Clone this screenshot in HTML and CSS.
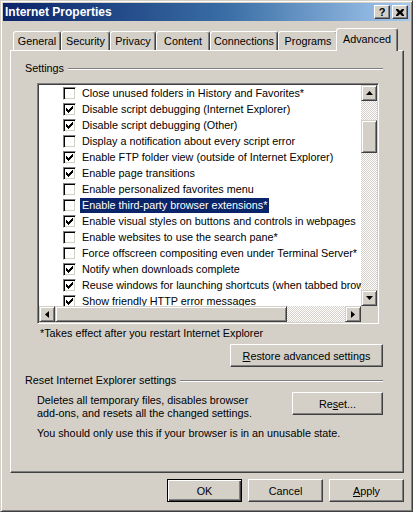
FILE: index.html
```html
<!DOCTYPE html>
<html>
<head>
<meta charset="utf-8">
<link rel="stylesheet" href="styles.css">
</head>
<body>
<div class="window">
  <div class="titlebar">
    <span class="title">Internet Properties</span>
    <div class="tbtns">
      <span class="tbtn help">?</span>
      <span class="tbtn"><svg width="8" height="7" viewBox="0 0 8 7"><path d="M0 0h2l2 2 2-2h2v1l-2 2.5 2 2.5v1h-2l-2-2-2 2h-2v-1l2-2.5-2-2.5z" fill="#000"/></svg></span>
    </div>
  </div>
  <div class="content">
    <div class="tabs">
      <div class="tab w-general">General</div>
      <div class="tab w-security">Security</div>
      <div class="tab w-privacy">Privacy</div>
      <div class="tab w-content">Content</div>
      <div class="tab w-connections">Connections</div>
      <div class="tab w-programs">Programs</div>
      <div class="tab active w-advanced">Advanced</div>
    </div>
    <div class="panel">
      <div class="group-label"><span>Settings</span><span class="etch"></span></div>
      <div class="listbox">
        <div class="lb-main">
          <div class="lb-rows">
            <div class="row"><span class="cb"></span><span class="lbl">Close unused folders in History and Favorites*</span></div>
            <div class="row"><span class="cb"><svg class="chk" viewBox="0 0 7 7"><path d="M0 2h1v3h-1zM1 3h1v3h-1zM2 4h1v3h-1zM3 3h1v3h-1zM4 2h1v3h-1zM5 1h1v3h-1zM6 0h1v3h-1z"/></svg></span><span class="lbl">Disable script debugging (Internet Explorer)</span></div>
            <div class="row"><span class="cb"><svg class="chk" viewBox="0 0 7 7"><path d="M0 2h1v3h-1zM1 3h1v3h-1zM2 4h1v3h-1zM3 3h1v3h-1zM4 2h1v3h-1zM5 1h1v3h-1zM6 0h1v3h-1z"/></svg></span><span class="lbl">Disable script debugging (Other)</span></div>
            <div class="row"><span class="cb"></span><span class="lbl">Display a notification about every script error</span></div>
            <div class="row"><span class="cb"><svg class="chk" viewBox="0 0 7 7"><path d="M0 2h1v3h-1zM1 3h1v3h-1zM2 4h1v3h-1zM3 3h1v3h-1zM4 2h1v3h-1zM5 1h1v3h-1zM6 0h1v3h-1z"/></svg></span><span class="lbl">Enable FTP folder view (outside of Internet Explorer)</span></div>
            <div class="row"><span class="cb"><svg class="chk" viewBox="0 0 7 7"><path d="M0 2h1v3h-1zM1 3h1v3h-1zM2 4h1v3h-1zM3 3h1v3h-1zM4 2h1v3h-1zM5 1h1v3h-1zM6 0h1v3h-1z"/></svg></span><span class="lbl">Enable page transitions</span></div>
            <div class="row"><span class="cb"></span><span class="lbl">Enable personalized favorites menu</span></div>
            <div class="row"><span class="cb"></span><span class="lbl sel">Enable third-party browser extensions*</span></div>
            <div class="row"><span class="cb"><svg class="chk" viewBox="0 0 7 7"><path d="M0 2h1v3h-1zM1 3h1v3h-1zM2 4h1v3h-1zM3 3h1v3h-1zM4 2h1v3h-1zM5 1h1v3h-1zM6 0h1v3h-1z"/></svg></span><span class="lbl">Enable visual styles on buttons and controls in webpages</span></div>
            <div class="row"><span class="cb"></span><span class="lbl">Enable websites to use the search pane*</span></div>
            <div class="row"><span class="cb"></span><span class="lbl">Force offscreen compositing even under Terminal Server*</span></div>
            <div class="row"><span class="cb"><svg class="chk" viewBox="0 0 7 7"><path d="M0 2h1v3h-1zM1 3h1v3h-1zM2 4h1v3h-1zM3 3h1v3h-1zM4 2h1v3h-1zM5 1h1v3h-1zM6 0h1v3h-1z"/></svg></span><span class="lbl">Notify when downloads complete</span></div>
            <div class="row"><span class="cb"><svg class="chk" viewBox="0 0 7 7"><path d="M0 2h1v3h-1zM1 3h1v3h-1zM2 4h1v3h-1zM3 3h1v3h-1zM4 2h1v3h-1zM5 1h1v3h-1zM6 0h1v3h-1z"/></svg></span><span class="lbl">Reuse windows for launching shortcuts (when tabbed browsing is on)</span></div>
            <div class="row"><span class="cb"><svg class="chk" viewBox="0 0 7 7"><path d="M0 2h1v3h-1zM1 3h1v3h-1zM2 4h1v3h-1zM3 3h1v3h-1zM4 2h1v3h-1zM5 1h1v3h-1zM6 0h1v3h-1z"/></svg></span><span class="lbl">Show friendly HTTP error messages</span></div>
          </div>
          <div class="vscroll">
            <span class="sbtn"><svg width="7" height="4" viewBox="0 0 7 4"><path d="M3.5 0L7 4H0z"/></svg></span>
            <div class="vtrack"><span class="vthumb"></span></div>
            <span class="sbtn"><svg width="7" height="4" viewBox="0 0 7 4"><path d="M0 0h7L3.5 4z"/></svg></span>
          </div>
        </div>
        <div class="lb-bottom">
          <div class="hscroll">
            <span class="sbtn"><svg width="4" height="7" viewBox="0 0 4 7"><path d="M4 0v7L0 3.5z"/></svg></span>
            <div class="htrack"><span class="hthumb"></span></div>
            <span class="sbtn"><svg width="4" height="7" viewBox="0 0 4 7"><path d="M0 0l4 3.5L0 7z"/></svg></span>
          </div>
          <div class="corner"></div>
        </div>
      </div>
      <p class="note">*Takes effect after you restart Internet Explorer</p>
      <div class="right-row"><span class="btn restore"><u>R</u>estore advanced settings</span></div>
      <div class="group-label reset-label"><span>Reset Internet Explorer settings</span><span class="etch"></span></div>
      <div class="reset-row">
        <p class="reset-text">Deletes all temporary files, disables browser<br>add-ons, and resets all the changed settings.</p>
        <span class="btn reset">Re<u>s</u>et...</span>
      </div>
      <p class="warn">You should only use this if your browser is in an unusable state.</p>
    </div>
    <div class="actions">
      <span class="btn dlg default">OK</span>
      <span class="btn dlg">Cancel</span>
      <span class="btn dlg"><u>A</u>pply</span>
    </div>
  </div>
</div>
</body>
</html>
```
FILE: styles.css
```css
* { box-sizing: border-box; }
html, body { margin: 0; padding: 0; }
body {
  background: #d4d0c8;
  font-family: "Liberation Sans", Arial, sans-serif;
  font-size: 10.8px;
  color: #000;
}
p { margin: 0; }
u { text-decoration: underline; text-underline-offset: 1px; }

.window {
  width: 413px;
  height: 512px;
  padding: 2px;
  background: #d4d0c8;
  border: 1px solid;
  border-color: #d4d0c8 #404040 #404040 #d4d0c8;
  box-shadow: inset 1px 1px #fff, inset -1px -1px #808080;
  display: flex;
  flex-direction: column;
}

.titlebar {
  height: 18px;
  background: linear-gradient(90deg, #0a246a 0%, #3a6ea5 55%, #a6caf0 100%);
  display: flex;
  align-items: center;
  justify-content: space-between;
  padding: 0 2px 0 2px;
}
.title {
  color: #fff;
  font-weight: bold;
  font-size: 12px;
  line-height: 18px;
}
.tbtns { display: flex; gap: 2px; }
.tbtn {
  width: 16px;
  height: 14px;
  background: #d4d0c8;
  border: 1px solid;
  border-color: #fff #404040 #404040 #fff;
  box-shadow: inset -1px -1px #808080;
  display: flex;
  align-items: center;
  justify-content: center;
  font-weight: bold;
  font-size: 11px;
  line-height: 1;
}

.content {
  flex: 1;
  display: flex;
  flex-direction: column;
  padding: 0 6px 0 7px;
}

.tabs {
  margin-top: 7px;
  height: 22px;
  display: flex;
  align-items: flex-end;
  padding-left: 3px;
}
.tab {
  height: 19px;
  padding-top: 3px;
  line-height: 13px;
  text-align: center;
  border-top: 1px solid #fff;
  border-left: 1px solid #fff;
  border-right: 1px solid #404040;
  box-shadow: inset -1px 0 #808080;
  border-radius: 3px 3px 0 0;
  background: #d4d0c8;
  white-space: nowrap;
}
.tab.active {
  height: 23px;
  padding-top: 4px;
  margin: 0 -2px -1px -2px;
  position: relative;
  z-index: 1;
}
.w-general { width: 48px; }
.w-security { width: 49px; }
.w-privacy { width: 46px; }
.w-content { width: 54px; }
.w-connections { width: 68px; }
.w-programs { width: 60px; }
.w-advanced { width: 62px; }

.panel {
  height: 423px;
  border: 1px solid;
  border-color: #fff #404040 #404040 #fff;
  box-shadow: inset -1px -1px #808080;
  padding: 11px 20px 0 14px;
  display: flex;
  flex-direction: column;
}

.group-label {
  display: flex;
  align-items: center;
  gap: 4px;
  line-height: 13px;
}
.etch {
  flex: 1;
  height: 2px;
  border-top: 1px solid #808080;
  border-bottom: 1px solid #fff;
}

.listbox {
  margin-top: 8px;
  margin-left: 12px;
  width: 342px;
  height: 241px;
  border: 1px solid;
  border-color: #808080 #fff #fff #808080;
  box-shadow: inset 1px 1px #404040, inset -1px -1px #d4d0c8;
  padding: 1px;
  background: #fff;
  display: flex;
  flex-direction: column;
}
.lb-main {
  height: 221px;
  display: flex;
}
.lb-rows {
  flex: 1;
  overflow: hidden;
  min-width: 0;
}
.row {
  height: 16px;
  display: flex;
  align-items: center;
  padding-left: 24px;
  white-space: nowrap;
}
.cb {
  flex: none;
  width: 13px;
  height: 13px;
  background: #fff;
  border: 1px solid;
  border-color: #808080 #fff #fff #808080;
  box-shadow: inset 1px 1px #000, inset -1px -1px #d4d0c8;
  margin-right: 4px;
  display: flex;
  align-items: center;
  justify-content: center;
}
.chk { width: 7px; height: 7px; fill: #000; shape-rendering: crispEdges; }
.lbl {
  padding: 0 2px;
  line-height: 15px;
}
.lbl.sel {
  background: #0a246a;
  color: #fff;
}

.sbtn {
  flex: none;
  width: 16px;
  height: 16px;
  background: #d4d0c8;
  border: 1px solid;
  border-color: #d4d0c8 #404040 #404040 #d4d0c8;
  box-shadow: inset 1px 1px #fff, inset -1px -1px #808080;
  display: flex;
  align-items: center;
  justify-content: center;
}
.sbtn svg { fill: #000; }

.vscroll {
  width: 16px;
  display: flex;
  flex-direction: column;
}
.vtrack, .htrack {
  flex: 1;
  background: repeating-conic-gradient(#fff 0 25%, #d4d0c8 0 50%) 0 0 / 2px 2px;
  display: flex;
}
.vtrack { flex-direction: column; }
.vthumb, .hthumb {
  background: #d4d0c8;
  border: 1px solid;
  border-color: #d4d0c8 #404040 #404040 #d4d0c8;
  box-shadow: inset 1px 1px #fff, inset -1px -1px #808080;
}
.vthumb { margin-top: 19px; height: 33px; width: 16px; }
.lb-bottom {
  height: 16px;
  display: flex;
}
.hscroll {
  flex: 1;
  display: flex;
}
.hthumb { width: 232px; height: 16px; }
.corner {
  width: 16px;
  background: #d4d0c8;
}

.note {
  margin-top: 3px;
  margin-left: 15px;
  line-height: 13px;
}
.right-row {
  margin-top: 4px;
  display: flex;
  justify-content: flex-end;
}
.btn {
  height: 23px;
  background: #d4d0c8;
  border: 1px solid;
  border-color: #fff #404040 #404040 #fff;
  box-shadow: inset -1px -1px #808080;
  display: flex;
  align-items: center;
  justify-content: center;
  white-space: nowrap;
}
.restore { width: 153px; }
.reset-label { margin-top: 7px; }
.reset-row {
  margin-top: 5px;
  display: flex;
  justify-content: space-between;
  align-items: flex-start;
}
.reset-text {
  margin-top: 2px;
  margin-left: 12px;
  line-height: 13px;
}
.reset { width: 91px; }
.warn {
  margin-top: 7px;
  margin-left: 12px;
  line-height: 13px;
}

.actions {
  margin-top: 6px;
  display: flex;
  justify-content: flex-end;
  gap: 6px;
}
.dlg { width: 75px; }
.dlg.default {
  border: 1px solid #000;
  box-shadow: inset 1px 1px #fff, inset -1px -1px #404040, inset -2px -2px #808080;
}
```
